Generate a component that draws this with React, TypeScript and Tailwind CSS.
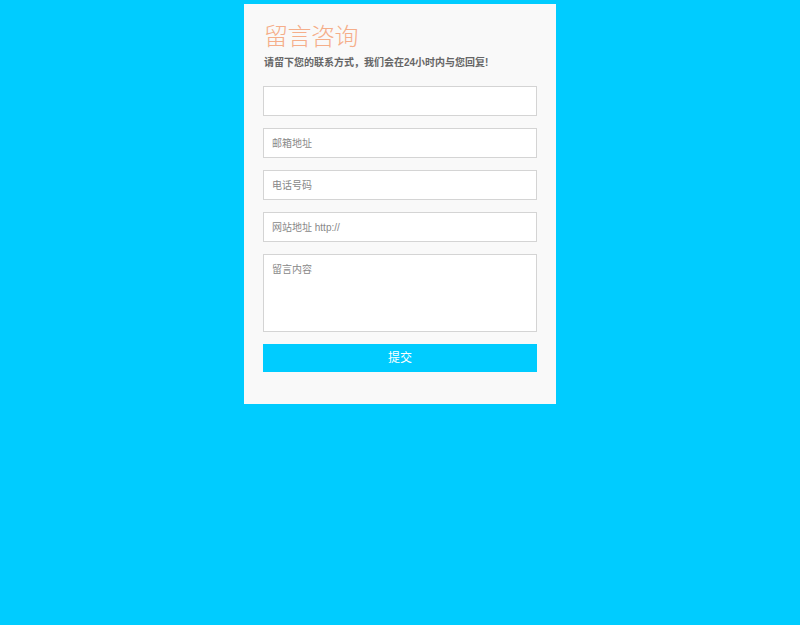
import React from "react";

export default function App() {
  const inputCls =
    "block w-full h-[30px] bg-white border border-[#d4d4d4] px-[8px] text-[10px] text-[#555] placeholder:text-[#888] outline-none";
  return (
    <div
      className="min-h-[625px] w-full bg-[#00ccff] flex justify-center pt-[4px]"
      style={{ fontFamily: '"Liberation Sans", "Noto Sans CJK SC", sans-serif' }}
    >
      <div className="w-[312px] h-[400px] bg-[#f9f9f9] px-[19px] pt-[18px]">
        <h1
          className="text-[24px] leading-[30px] text-[#f5ae8a] font-light pl-[1px] tracking-[-0.5px]"
          style={{ fontFamily: '"Liberation Serif", "Noto Sans CJK SC", serif' }}
        >
          留言咨询
        </h1>
        <p className="mt-[4px] text-[10px] leading-[14px] font-bold text-[#666] pl-[1px]">
          请留下您的联系方式，我们会在24小时内与您回复!
        </p>
        <form className="mt-[16px] flex flex-col gap-[12px]" onSubmit={(e) => e.preventDefault()}>
          <input className={inputCls} type="text" />
          <input className={inputCls} type="text" placeholder="邮箱地址" />
          <input className={inputCls} type="text" placeholder="电话号码" />
          <input className={inputCls} type="text" placeholder="网站地址 http://" />
          <textarea
            className="block w-full h-[78px] bg-white border border-[#d4d4d4] px-[8px] py-[7px] text-[10px] text-[#555] placeholder:text-[#888] outline-none resize-none"
            placeholder="留言内容"
          />
          <button
            type="submit"
            className="block w-full h-[28px] bg-[#00ccff] text-white text-[12px]"
          >
            提交
          </button>
        </form>
      </div>
    </div>
  );
}
